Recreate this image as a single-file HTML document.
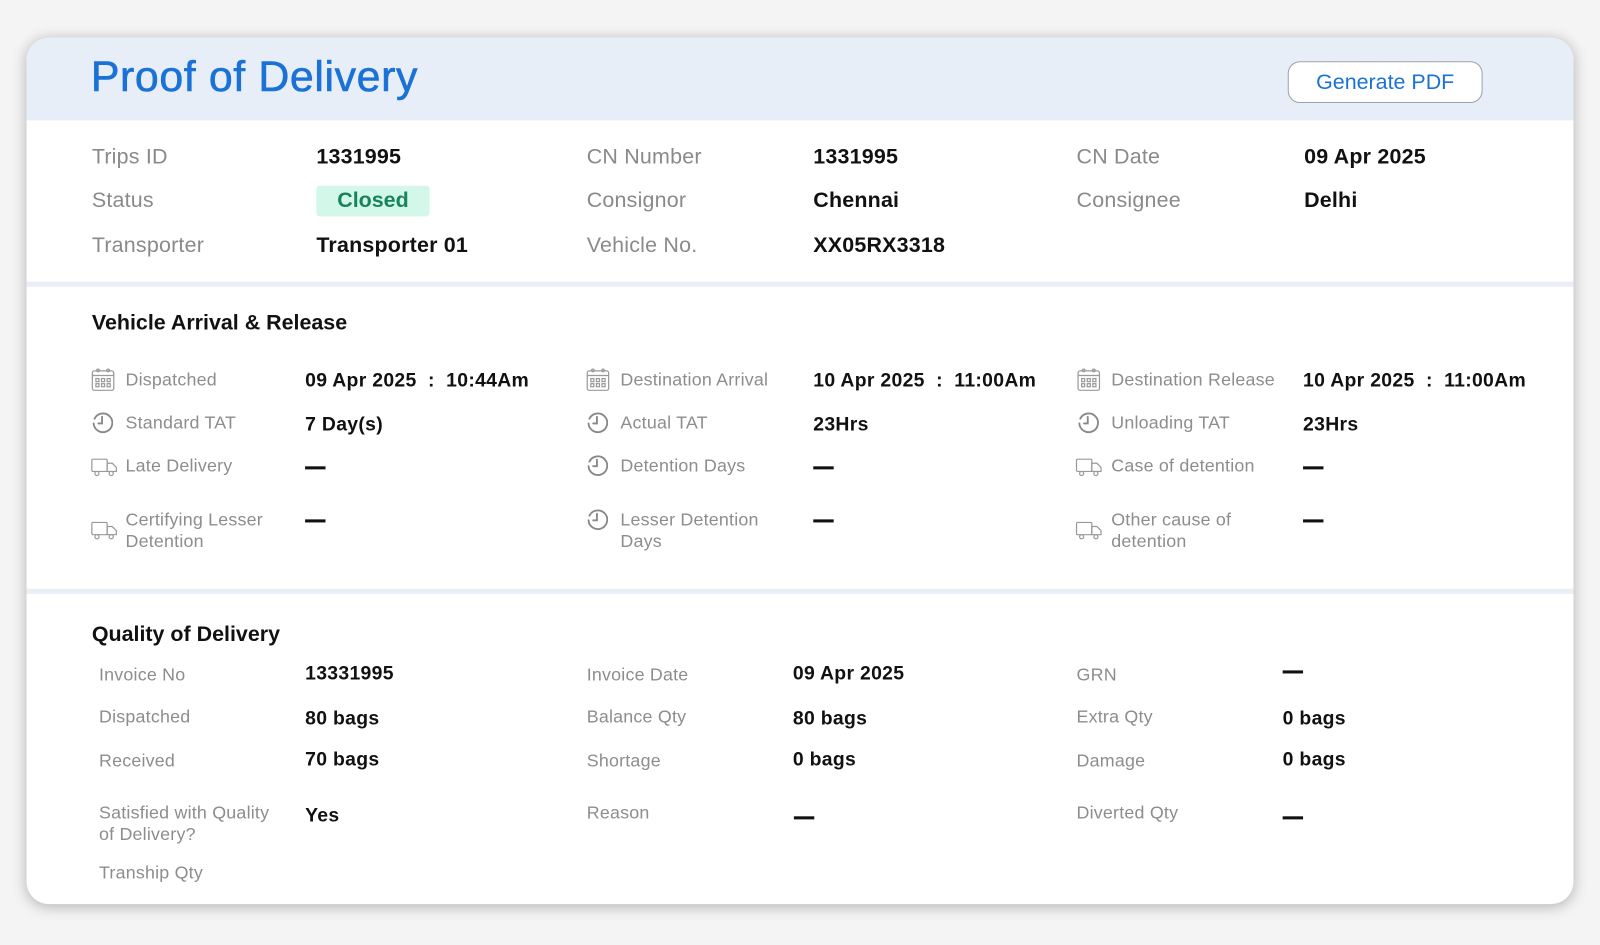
<!DOCTYPE html>
<html><head><meta charset="utf-8">
<style>
*{margin:0;padding:0;box-sizing:border-box}
body{width:1600px;height:945px;background:#f4f4f4;font-family:"Liberation Sans",sans-serif;position:relative;overflow:hidden}
#w{position:absolute;left:0;top:0;width:1568px;height:926px;transform:scale(1.0204);transform-origin:0 0}
.card{position:absolute;left:26px;top:37px;width:1516px;height:849px;background:#fff;border-radius:22px;box-shadow:0 2px 14px rgba(0,0,0,.28);overflow:hidden}
.hdr{position:absolute;left:0;top:0;width:100%;height:81px;background:#e8eef8}
.sep{position:absolute;left:0;width:100%;height:5px;background:#eaeef6}
.a{position:absolute;white-space:nowrap}
.l1{font-size:21px;color:#8a8a8a;line-height:26px;letter-spacing:0.2px}
.v1{font-size:21px;color:#111;font-weight:bold;line-height:26px;letter-spacing:0.2px}
.l2{font-size:17.5px;color:#8d8d8d;line-height:21px;letter-spacing:0.2px}
.v2{font-size:19px;color:#111;font-weight:bold;line-height:24px;letter-spacing:0.3px}
.h{font-size:21px;color:#111;font-weight:bold;line-height:26px}
.d{position:absolute;width:20px;height:3px;background:#111}
.ic{position:absolute}
</style></head><body>
<svg width="0" height="0" style="position:absolute">
<defs>
<symbol id="cal" viewBox="0 0 24 24"><g fill="none" stroke="#999" stroke-width="1.2"><rect x="1.5" y="3.5" width="21" height="19" rx="2"/><line x1="1.5" y1="8" x2="22.5" y2="8"/><circle cx="7" cy="3" r="1.3"/><circle cx="17" cy="3" r="1.3"/><rect x="5" y="11" width="3" height="3"/><rect x="10.5" y="11" width="3" height="3"/><rect x="16" y="11" width="3" height="3"/><rect x="5" y="16" width="3" height="3"/><rect x="10.5" y="16" width="3" height="3"/><rect x="16" y="16" width="3" height="3"/></g></symbol>
<symbol id="clk" viewBox="0 0 24 24"><g fill="none" stroke="#888" stroke-width="2" stroke-linecap="round"><path d="M4 8A10 10 0 1 1 3 13"/><path d="M12 6v7H8"/></g></symbol>
<symbol id="trk" viewBox="0 0 26 20"><g fill="none" stroke="#999" stroke-width="1.2"><rect x="1" y="2" width="15" height="12" rx="1"/><path d="M16 6h5l4 4v4h-9z"/><circle cx="6" cy="16" r="2"/><circle cx="20" cy="16" r="2"/></g></symbol>
</defs></svg>
<div id="w">
<div class="card">
<div class="hdr"></div>
<div class="a" style="left:63px;top:13px;font-size:42px;letter-spacing:0.6px;color:#1a72d6;line-height:50px;-webkit-text-stroke:0.6px #1a72d6">Proof of Delivery</div>
<div class="a" style="left:1236px;top:23px;width:191px;height:41px;border:1px solid #9aa3ad;border-radius:12px;background:#fff;color:#1a72d6;font-size:21px;line-height:39px;text-align:center">Generate PDF</div>
<div class="sep" style="top:239px"></div>
<div class="sep" style="top:540px"></div>
</div>

<div class="a l1" style="left:90px;top:141px">Trips ID</div>
<div class="a v1" style="left:310px;top:141px">1331995</div>
<div class="a l1" style="left:575px;top:141px">CN Number</div>
<div class="a v1" style="left:797px;top:141px">1331995</div>
<div class="a l1" style="left:1055px;top:141px">CN Date</div>
<div class="a v1" style="left:1278px;top:141px">09 Apr 2025</div>

<div class="a l1" style="left:90px;top:184px">Status</div>
<div class="a" style="left:310px;top:182px;width:111px;height:30px;background:#d3f8ea;border-radius:3px;color:#17845e;font-size:21px;font-weight:bold;line-height:30px;text-align:center">Closed</div>
<div class="a l1" style="left:575px;top:184px">Consignor</div>
<div class="a v1" style="left:797px;top:184px">Chennai</div>
<div class="a l1" style="left:1055px;top:184px">Consignee</div>
<div class="a v1" style="left:1278px;top:184px">Delhi</div>

<div class="a l1" style="left:90px;top:228px">Transporter</div>
<div class="a v1" style="left:310px;top:228px">Transporter 01</div>
<div class="a l1" style="left:575px;top:228px">Vehicle No.</div>
<div class="a v1" style="left:797px;top:228px">XX05RX3318</div>

<div class="a h" style="left:90px;top:304px">Vehicle Arrival &amp; Release</div>

<svg class="ic" style="left:89px;top:360px" width="24" height="24"><use href="#cal"/></svg>
<div class="a l2" style="left:123px;top:362px">Dispatched</div>
<div class="a v2" style="left:299px;top:362px">09 Apr 2025 &nbsp;:&nbsp; 10:44Am</div>
<svg class="ic" style="left:574px;top:360px" width="24" height="24"><use href="#cal"/></svg>
<div class="a l2" style="left:608px;top:362px">Destination Arrival</div>
<div class="a v2" style="left:797px;top:362px">10 Apr 2025 &nbsp;:&nbsp; 11:00Am</div>
<svg class="ic" style="left:1055px;top:360px" width="24" height="24"><use href="#cal"/></svg>
<div class="a l2" style="left:1089px;top:362px">Destination Release</div>
<div class="a v2" style="left:1277px;top:362px">10 Apr 2025 &nbsp;:&nbsp; 11:00Am</div>

<svg class="ic" style="left:89px;top:403px" width="22" height="22"><use href="#clk"/></svg>
<div class="a l2" style="left:123px;top:404px">Standard TAT</div>
<div class="a v2" style="left:299px;top:405px">7 Day(s)</div>
<svg class="ic" style="left:574px;top:403px" width="22" height="22"><use href="#clk"/></svg>
<div class="a l2" style="left:608px;top:404px">Actual TAT</div>
<div class="a v2" style="left:797px;top:405px">23Hrs</div>
<svg class="ic" style="left:1055px;top:403px" width="22" height="22"><use href="#clk"/></svg>
<div class="a l2" style="left:1089px;top:404px">Unloading TAT</div>
<div class="a v2" style="left:1277px;top:405px">23Hrs</div>

<svg class="ic" style="left:89px;top:448px" width="26" height="20"><use href="#trk"/></svg>
<div class="a l2" style="left:123px;top:446px">Late Delivery</div>
<div class="d" style="left:299px;top:457px"></div>
<svg class="ic" style="left:574px;top:445px" width="22" height="22"><use href="#clk"/></svg>
<div class="a l2" style="left:608px;top:446px">Detention Days</div>
<div class="d" style="left:797px;top:457px"></div>
<svg class="ic" style="left:1054px;top:448px" width="26" height="20"><use href="#trk"/></svg>
<div class="a l2" style="left:1089px;top:446px">Case of detention</div>
<div class="d" style="left:1277px;top:457px"></div>

<svg class="ic" style="left:89px;top:510px" width="26" height="20"><use href="#trk"/></svg>
<div class="a l2" style="left:123px;top:499px">Certifying Lesser<br>Detention</div>
<div class="d" style="left:299px;top:509px"></div>
<svg class="ic" style="left:574px;top:498px" width="22" height="22"><use href="#clk"/></svg>
<div class="a l2" style="left:608px;top:499px">Lesser Detention<br>Days</div>
<div class="d" style="left:797px;top:509px"></div>
<svg class="ic" style="left:1054px;top:510px" width="26" height="20"><use href="#trk"/></svg>
<div class="a l2" style="left:1089px;top:499px">Other cause of<br>detention</div>
<div class="d" style="left:1277px;top:509px"></div>

<div class="a h" style="left:90px;top:609px">Quality of Delivery</div>

<div class="a l2" style="left:97px;top:651px">Invoice No</div>
<div class="a v2" style="left:299px;top:649px">13331995</div>
<div class="a l2" style="left:575px;top:651px">Invoice Date</div>
<div class="a v2" style="left:777px;top:649px">09 Apr 2025</div>
<div class="a l2" style="left:1055px;top:651px">GRN</div>
<div class="d" style="left:1257px;top:657px"></div>

<div class="a l2" style="left:97px;top:692px">Dispatched</div>
<div class="a v2" style="left:299px;top:693px">80 bags</div>
<div class="a l2" style="left:575px;top:692px">Balance Qty</div>
<div class="a v2" style="left:777px;top:693px">80 bags</div>
<div class="a l2" style="left:1055px;top:692px">Extra Qty</div>
<div class="a v2" style="left:1257px;top:693px">0 bags</div>

<div class="a l2" style="left:97px;top:735px">Received</div>
<div class="a v2" style="left:299px;top:733px">70 bags</div>
<div class="a l2" style="left:575px;top:735px">Shortage</div>
<div class="a v2" style="left:777px;top:733px">0 bags</div>
<div class="a l2" style="left:1055px;top:735px">Damage</div>
<div class="a v2" style="left:1257px;top:733px">0 bags</div>

<div class="a l2" style="left:97px;top:786px">Satisfied with Quality<br>of Delivery?</div>
<div class="a v2" style="left:299px;top:788px">Yes</div>
<div class="a l2" style="left:575px;top:786px">Reason</div>
<div class="d" style="left:778px;top:800px"></div>
<div class="a l2" style="left:1055px;top:786px">Diverted Qty</div>
<div class="d" style="left:1257px;top:800px"></div>

<div class="a l2" style="left:97px;top:845px">Tranship Qty</div>
</div>
</body></html>
